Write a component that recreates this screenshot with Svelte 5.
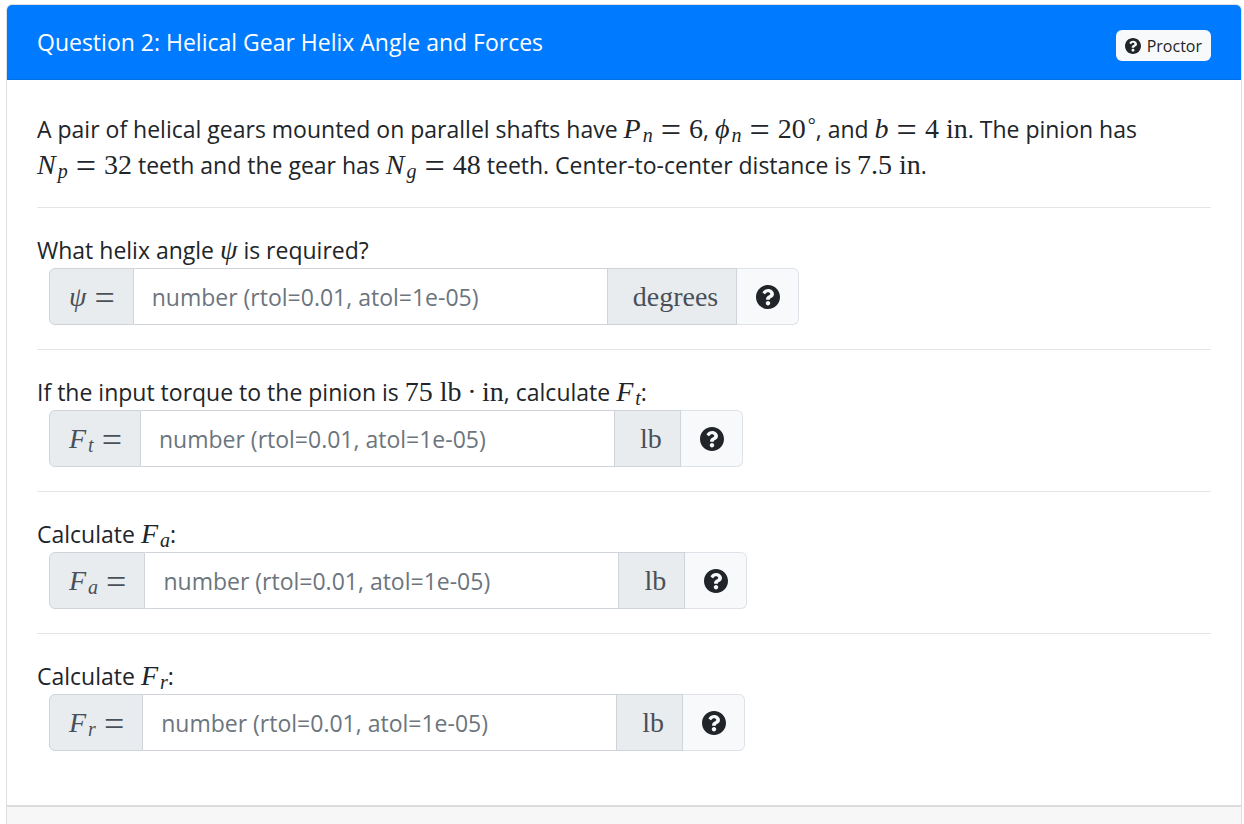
<script>
  const placeholder = "number (rtol=0.01, atol=1e-05)";

  let answers = $state({ psi: "", ft: "", fa: "", fr: "" });

  const questions = [
    { id: "psi", symbol: "ψ", sub: "", unit: "degrees" },
    { id: "ft", symbol: "F", sub: "t", unit: "lb" },
    { id: "fa", symbol: "F", sub: "a", unit: "lb" },
    { id: "fr", symbol: "F", sub: "r", unit: "lb" },
  ];
</script>

{#snippet helpIcon()}
  <svg class="help-icon" viewBox="8 8 496 496" aria-hidden="true">
    <path
      fill="currentColor"
      d="M504 256c0 136.997-111.043 248-248 248S8 392.997 8 256C8 119.083 119.043 8 256 8s248 111.083 248 248zM262.655 90c-54.497 0-89.255 22.957-116.549 63.758-3.536 5.286-2.353 12.415 2.715 16.258l34.699 26.31c5.205 3.947 12.621 3.008 16.665-2.122 17.864-22.658 30.113-35.797 57.303-35.797 20.429 0 45.698 13.148 45.698 32.958 0 14.976-12.363 22.667-32.534 33.976C247.128 238.528 216 254.941 216 296v4c0 6.627 5.373 12 12 12h56c6.627 0 12-5.373 12-12v-1.333c0-28.462 83.186-29.647 83.186-106.667 0-58.002-60.165-102-116.531-102zM256 338c-25.365 0-46 20.635-46 46 0 25.364 20.635 46 46 46s46-20.636 46-46c0-25.364-20.635-46-46-46z"
    />
  </svg>
{/snippet}

{#snippet variable(symbol, sub)}<i>{symbol}</i>{#if sub}<sub>{sub}</sub>{/if}{/snippet}

{#snippet equation(symbol, sub, value)}<span class="math">{@render variable(symbol, sub)}<span class="rel">=</span>{value}</span>{/snippet}

<main class="card">
  <header class="card-header">
    <h1>Question 2: Helical Gear Helix Angle and Forces</h1>
    <button type="button" class="proctor">{@render helpIcon()}Proctor</button>
  </header>

  <div class="card-body">
    <p>
      A pair of helical gears mounted on parallel shafts have {@render equation("P", "n", "6")},
      <span class="math">{@render variable("ϕ", "n")}<span class="rel">=</span>20<sup>°</sup></span>, and
      {@render equation("b", "", "4 in")}. The pinion has {@render equation("N", "p", "32")} teeth and the gear has
      {@render equation("N", "g", "48")} teeth. Center-to-center distance is <span class="math">7.5 in</span>.
    </p>

    {#each questions as q (q.id)}
      <hr />
      <label for={q.id}>
        {#if q.id === "psi"}
          What helix angle <span class="math">{@render variable(q.symbol, q.sub)}</span> is required?
        {:else if q.id === "ft"}
          If the input torque to the pinion is <span class="math">75 lb&thinsp;·&thinsp;in</span>, calculate
          <span class="math">{@render variable(q.symbol, q.sub)}</span>:
        {:else}
          Calculate <span class="math">{@render variable(q.symbol, q.sub)}</span>:
        {/if}
      </label>
      <div class="input-group">
        <span class="addon">{@render equation(q.symbol, q.sub, "")}</span>
        <input id={q.id} type="text" {placeholder} autocomplete="off" bind:value={answers[q.id]} />
        <span class="addon unit"><span class="math">{q.unit}</span></span>
        <button type="button" class="help" aria-label="Help">{@render helpIcon()}</button>
      </div>
    {/each}
  </div>

  <footer class="card-footer"></footer>
</main>

<style>
  :global(body) {
    background: #fff;
    color: #212529;
    font-family: "Open Sans", "Noto Sans", sans-serif;
    font-size: 23px;
    line-height: 36px;
  }

  :global(#app) {
    display: flex;
    flex-direction: column;
    min-height: 100vh;
  }

  .card {
    flex: 1;
    display: flex;
    flex-direction: column;
    margin: 4px 2px 0 6px;
    border: 1px solid #dfdfdf;
    border-bottom: 0;
    border-radius: 6px 6px 0 0;
    overflow: hidden;
  }

  .card-header {
    display: flex;
    justify-content: space-between;
    align-items: flex-end;
    padding: 19px 30px 18px;
    background: #007bff;
    border-bottom: 1px solid #006fe6;
    color: #fff;
  }

  h1 {
    margin: 0;
    font-size: 23px;
    font-weight: 400;
    line-height: 37px;
  }

  button {
    display: flex;
    align-items: center;
    font-family: inherit;
    color: #212529;
    background: #f8f9fa;
    cursor: pointer;
  }

  .proctor {
    gap: 6px;
    height: 31px;
    padding: 0 9px;
    border: 0;
    border-radius: 6px;
    font-size: 16px;
  }

  .proctor .help-icon {
    width: 16px;
    height: 16px;
  }

  .card-body {
    padding: 31px 30px 54px;
  }

  p {
    margin: 0;
  }

  hr {
    margin: 24px 0;
    border: 0;
    border-top: 1px solid #e5e5e5;
  }

  label {
    display: block;
  }

  .math {
    display: inline-block;
    font-family: "Liberation Serif", "DejaVu Serif", serif;
    font-size: 28px;
    line-height: 36px;
    white-space: nowrap;
  }

  .math :global(sub),
  .math :global(sup) {
    margin-left: 2px;
    font-size: 20px;
    line-height: 0;
  }

  .math :global(sub) {
    font-style: italic;
    vertical-align: -4px;
  }

  .math :global(sup) {
    vertical-align: 6px;
  }

  .rel {
    margin: 0 8px;
    font-size: 36px;
    line-height: 0;
    vertical-align: -4px;
  }

  .input-group {
    display: flex;
    height: 57px;
    margin-left: 12px;
  }

  .addon {
    display: flex;
    align-items: center;
    padding: 0 10px 0 19px;
    background: #e9ecef;
    border: 1px solid #ced4da;
    border-radius: 6px 0 0 6px;
    color: #495057;
  }

  .unit {
    padding: 0 18px 0 25px;
    border-radius: 0;
  }

  input {
    box-sizing: border-box;
    width: 473px;
    min-width: 0;
    padding: 0 18px;
    border: 1px solid #ced4da;
    border-width: 1px 0;
    background: #fff;
    color: #495057;
    font: inherit;
  }

  input::placeholder {
    color: #6c757d;
    opacity: 1;
  }

  .help {
    padding: 0 18px 0 19px;
    border: 1px solid #dfe2e8;
    border-left: 0;
    border-radius: 0 6px 6px 0;
  }

  .help .help-icon {
    width: 24px;
    height: 24px;
  }

  .card-footer {
    flex: 1;
    border-top: 2px solid #dcdcdc;
    background: #f7f7f7;
  }
</style>
